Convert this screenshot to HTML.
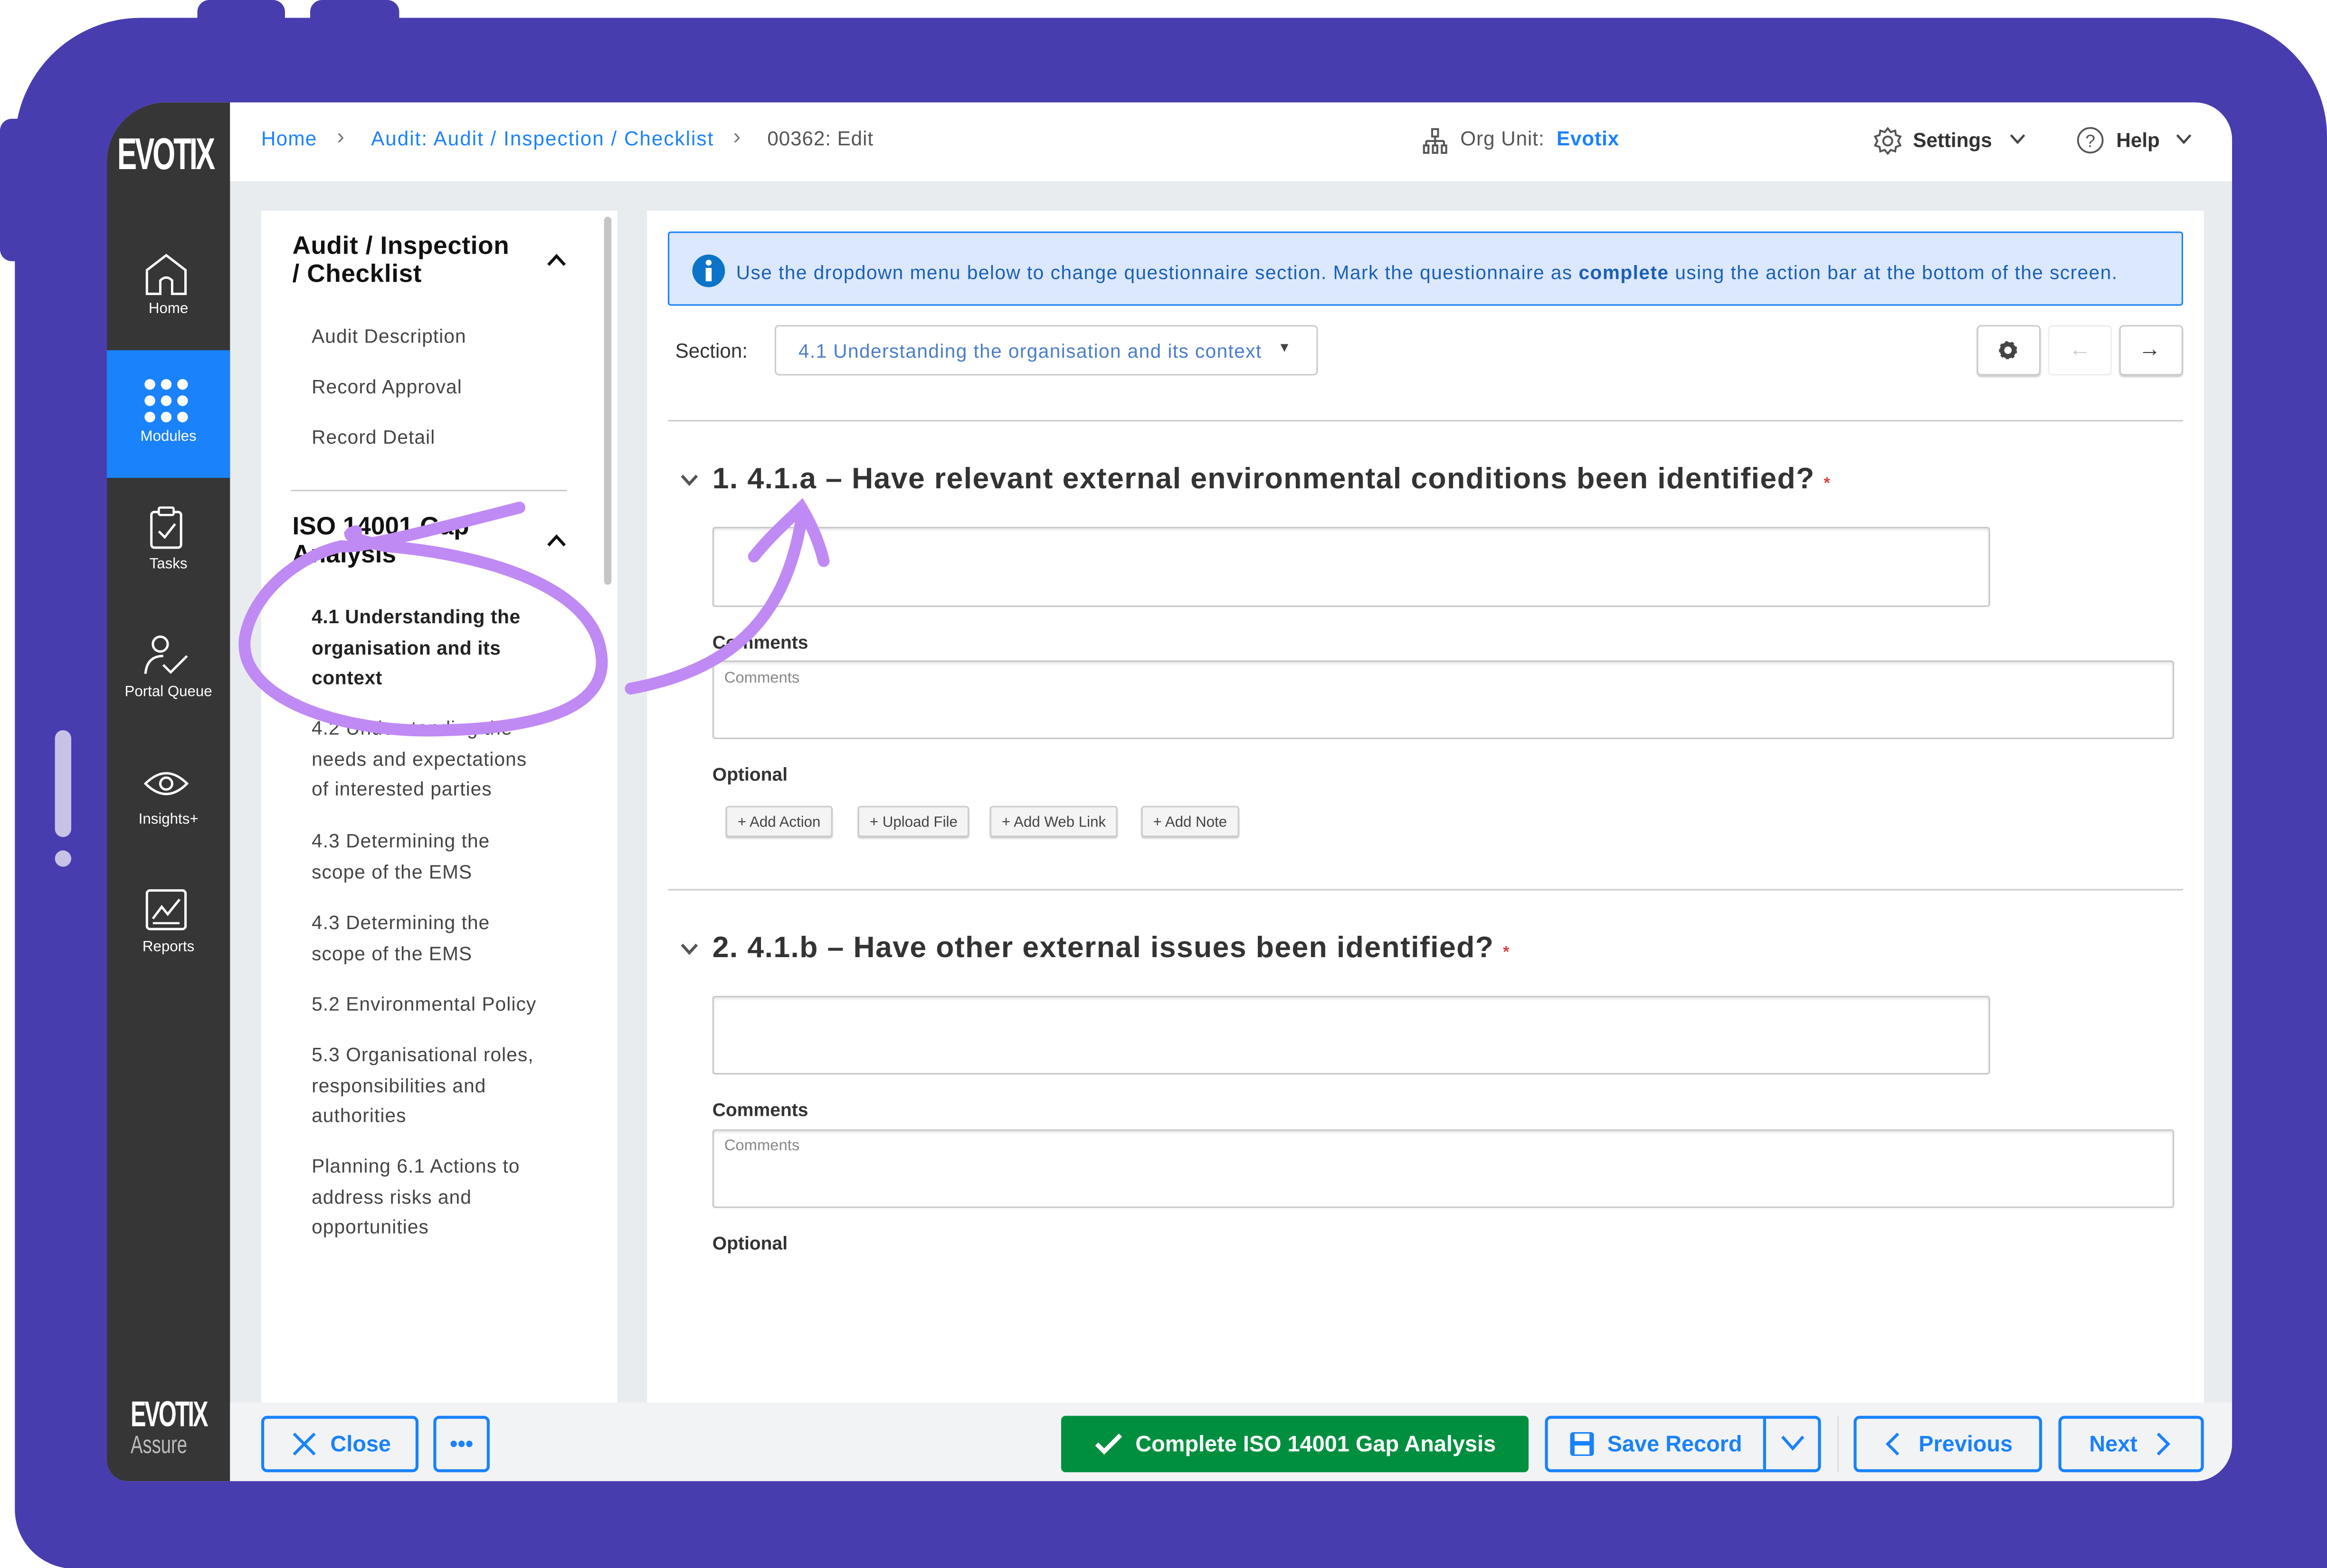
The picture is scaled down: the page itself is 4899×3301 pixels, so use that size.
<!DOCTYPE html>
<html><head><meta charset="utf-8"><style>
html,body{margin:0;padding:0;background:#fff;overflow:hidden}
body{width:4899px;height:3301px;position:relative}
#w{position:absolute;left:0;top:0;width:1568px;height:1057px;transform:scale(3.1244);transform-origin:0 0;font-family:"Liberation Sans",sans-serif}
.a{position:absolute}
.t{position:absolute;white-space:nowrap}
.side .it{position:absolute;left:0;width:83px;text-align:center;color:#fff;font-size:10px}
.nav{font-size:13px;color:#444;line-height:20.5px;position:absolute;left:210px;letter-spacing:0.35px}
.btnb{position:absolute;border:2px solid #1a82fb;border-radius:4px;color:#1a82fb;font-weight:bold;font-size:15px;box-sizing:border-box;height:38px;top:954px;display:flex;align-items:center;justify-content:center;background:#f2f3f5}
.opt{position:absolute;top:543px;height:21px;border:1px solid #ccc;border-radius:2px;background:#f4f4f4;font-size:10px;color:#444;line-height:21px;padding:0 7px;box-sizing:border-box;box-shadow:0 1px 1px #ccc}
.ta{position:absolute;border:1px solid #c8c8c8;border-radius:2px;background:#fff;box-shadow:inset 0 1px 2px #e3e3e3}
.q{font-size:20px;color:#333;font-weight:bold;letter-spacing:0.45px}
.lab{font-size:12.5px;font-weight:bold;color:#333}
</style></head><body><div id="w">
<div class="a" style="left:10px;top:12px;width:1558px;height:1045px;background:#483dae;border-radius:85px 80px 0 40px"></div>
<div class="a" style="left:133px;top:0;width:59px;height:20px;background:#483dae;border-radius:8px 8px 0 0"></div>
<div class="a" style="left:209px;top:0;width:60px;height:20px;background:#483dae;border-radius:8px 8px 0 0"></div>
<div class="a" style="left:0;top:80px;width:20px;height:96px;background:#483dae;border-radius:8px 0 0 8px"></div>
<div class="a" style="left:37px;top:492px;width:11px;height:72px;background:#c6c3e6;border-radius:6px"></div>
<div class="a" style="left:37px;top:573px;width:11px;height:11px;background:#c6c3e6;border-radius:6px"></div>
<div class="a" style="left:72px;top:69px;width:1432px;height:929px;background:#e8ecef;border-radius:40px 25px 25px 14px;overflow:hidden">
 <div class="a" style="left:0;top:0;width:83px;height:929px;background:#363636"></div>
 <div class="a" style="left:83px;top:0;width:1349px;height:53px;background:#fff"></div>
 <div class="a" style="left:83px;top:876px;width:1349px;height:53px;background:#f2f3f5"></div>
</div>
<div class="side">
 <div class="t" style="left:79px;top:88px;color:#fff;font-size:30px;font-weight:bold;letter-spacing:-2px;transform:scaleX(0.66);transform-origin:0 0">EVOTIX</div>
 <svg class="a" style="left:96px;top:170px" width="32" height="30" viewBox="0 0 32 30"><path d="M3 12 L16 2 L29 12 V28 H20 V19 Q16 15 12 19 V28 H3 Z" fill="none" stroke="#fff" stroke-width="1.6"/></svg>
 <div class="it" style="left:72px;top:203px">Home</div>
 <div class="a" style="left:72px;top:236px;width:83px;height:86px;background:#1a82fb"></div>
 <svg class="a" style="left:97px;top:255px" width="30" height="30"><g fill="#fff"><circle cx="4" cy="4" r="3.6"/><circle cx="15" cy="4" r="3.6"/><circle cx="26" cy="4" r="3.6"/><circle cx="4" cy="15" r="3.6"/><circle cx="15" cy="15" r="3.6"/><circle cx="26" cy="15" r="3.6"/><circle cx="4" cy="26" r="3.6"/><circle cx="15" cy="26" r="3.6"/><circle cx="26" cy="26" r="3.6"/></g></svg>
 <div class="it" style="left:72px;top:289px">Modules</div>
 <svg class="a" style="left:100px;top:341px" width="24" height="30"><rect x="2" y="4" width="20" height="24" rx="2" fill="none" stroke="#fff" stroke-width="1.6"/><rect x="7" y="1" width="10" height="5" rx="1" fill="#363636" stroke="#fff" stroke-width="1.5"/><path d="M7 17 L11 21 L18 12" fill="none" stroke="#fff" stroke-width="1.6"/></svg>
 <div class="it" style="left:72px;top:375px">Tasks</div>
 <svg class="a" style="left:96px;top:426px" width="32" height="32"><circle cx="12" cy="8" r="5" fill="none" stroke="#fff" stroke-width="1.6"/><path d="M2 28 Q3 16 14 16" fill="none" stroke="#fff" stroke-width="1.6"/><path d="M14 22 L19 27 L30 16" fill="none" stroke="#fff" stroke-width="1.6"/></svg>
 <div class="it" style="left:72px;top:461px">Portal Queue</div>
 <svg class="a" style="left:96px;top:518px" width="32" height="20"><path d="M2 10 Q16 -4 30 10 Q16 24 2 10Z" fill="none" stroke="#fff" stroke-width="1.6"/><circle cx="16" cy="10" r="4" fill="none" stroke="#fff" stroke-width="1.6"/></svg>
 <div class="it" style="left:72px;top:547px">Insights+</div>
 <svg class="a" style="left:98px;top:599px" width="28" height="28"><rect x="1" y="1" width="26" height="26" rx="2" fill="none" stroke="#fff" stroke-width="1.6"/><path d="M5 20 L11 12 L15 17 L23 7" fill="none" stroke="#fff" stroke-width="1.6"/><path d="M5 23 H23" stroke="#fff" stroke-width="1.4"/></svg>
 <div class="it" style="left:72px;top:633px">Reports</div>
 <div class="t" style="left:88px;top:940px;color:#fff;font-size:24px;font-weight:bold;letter-spacing:-1.5px;transform:scaleX(0.65);transform-origin:0 0">EVOTIX</div>
 <div class="t" style="left:88px;top:964px;color:#bbb;font-size:17px;transform:scaleX(0.72);transform-origin:0 0">Assure</div>
</div>
<div class="t" style="left:176px;top:86px;font-size:13.5px;color:#1a82fb;letter-spacing:0.4px">Home</div>
<div class="t" style="left:227px;top:84px;font-size:15px;color:#777">›</div>
<div class="t" style="left:250px;top:86px;font-size:13.5px;color:#1a82fb;letter-spacing:0.65px">Audit: Audit / Inspection / Checklist</div>
<div class="t" style="left:494px;top:84px;font-size:15px;color:#777">›</div>
<div class="t" style="left:517px;top:86px;font-size:13.5px;color:#555;letter-spacing:0.3px">00362: Edit</div>
<svg class="a" style="left:958px;top:86px" width="18" height="18"><g fill="none" stroke="#555" stroke-width="1.3"><rect x="7" y="1" width="4" height="5"/><path d="M9 6 V9 M3 9 H15 M3 9 V12 M9 9 V12 M15 9 V12"/><rect x="1.5" y="12" width="3" height="5"/><rect x="7.5" y="12" width="3" height="5"/><rect x="13.5" y="12" width="3" height="5"/></g></svg>
<div class="t" style="left:984px;top:86px;font-size:13.5px;color:#555;letter-spacing:0.3px">Org Unit:&nbsp; <span style="color:#1a82fb;font-weight:bold">Evotix</span></div>
<svg class="a" style="left:1262px;top:85px" width="20" height="20"><circle cx="10" cy="10" r="3" fill="none" stroke="#555" stroke-width="1.3"/><path d="M10 1.5 L12 4 L15 3 L15.5 6 L18.5 7 L17 10 L18.5 13 L15.5 14 L15 17 L12 16 L10 18.5 L8 16 L5 17 L4.5 14 L1.5 13 L3 10 L1.5 7 L4.5 6 L5 3 L8 4 Z" fill="none" stroke="#555" stroke-width="1.3"/></svg>
<div class="t" style="left:1289px;top:87px;font-size:13.5px;color:#333;font-weight:bold">Settings</div>
<svg class="a" style="left:1354px;top:90px" width="11" height="8"><path d="M1 1 L5.5 6 L10 1" fill="none" stroke="#444" stroke-width="1.5"/></svg>
<svg class="a" style="left:1399px;top:85px" width="19" height="19"><circle cx="9.5" cy="9.5" r="8.3" fill="none" stroke="#555" stroke-width="1.2"/><text x="9.5" y="14" font-size="12" text-anchor="middle" fill="#555" font-family="Liberation Sans">?</text></svg>
<div class="t" style="left:1426px;top:87px;font-size:13.5px;color:#333;font-weight:bold">Help</div>
<svg class="a" style="left:1466px;top:90px" width="11" height="8"><path d="M1 1 L5.5 6 L10 1" fill="none" stroke="#444" stroke-width="1.5"/></svg>
<div class="a" style="left:176px;top:142px;width:240px;height:803px;background:#fff"></div>
<div class="a" style="left:407px;top:146px;width:5px;height:248px;background:#c5c5c5;border-radius:3px"></div>
<div class="t" style="left:197px;top:156px;font-size:17px;font-weight:bold;color:#111;line-height:19px;letter-spacing:0.2px">Audit / Inspection<br>/ Checklist</div>
<svg class="a" style="left:368px;top:170px" width="14" height="10"><path d="M1.5 8.5 L7 2.5 L12.5 8.5" fill="none" stroke="#111" stroke-width="2"/></svg>
<div class="nav" style="top:217px">Audit Description</div>
<div class="nav" style="top:251px">Record Approval</div>
<div class="nav" style="top:285px">Record Detail</div>
<div class="a" style="left:196px;top:330px;width:186px;height:1px;background:#ccc"></div>
<div class="t" style="left:197px;top:345px;font-size:17px;font-weight:bold;color:#111;line-height:19px">ISO 14001 Gap<br>Analysis</div>
<svg class="a" style="left:368px;top:359px" width="14" height="10"><path d="M1.5 8.5 L7 2.5 L12.5 8.5" fill="none" stroke="#111" stroke-width="2"/></svg>
<div class="nav" style="top:406px;font-weight:bold;color:#222;letter-spacing:0.2px">4.1 Understanding the<br>organisation and its<br>context</div>
<div class="nav" style="top:481px">4.2 Understanding the<br>needs and expectations<br>of interested parties</div>
<div class="nav" style="top:557px">4.3 Determining the<br>scope of the EMS</div>
<div class="nav" style="top:612px">4.3 Determining the<br>scope of the EMS</div>
<div class="nav" style="top:667px">5.2 Environmental Policy</div>
<div class="nav" style="top:701px">5.3 Organisational roles,<br>responsibilities and<br>authorities</div>
<div class="nav" style="top:776px">Planning 6.1 Actions to<br>address risks and<br>opportunities</div>
<div class="a" style="left:436px;top:142px;width:1049px;height:803px;background:#fff"></div>
<div class="a" style="left:450px;top:156px;width:1021px;height:50px;background:#dce8fd;border:1px solid #1a82fb;border-radius:2px;box-sizing:border-box"></div>
<svg class="a" style="left:466px;top:171px" width="23" height="23"><circle cx="11.5" cy="11.5" r="11" fill="#0b74c8"/><circle cx="11.5" cy="6" r="2" fill="#fff"/><rect x="9.5" y="9.5" width="4" height="9" fill="#fff"/></svg>
<div class="t" style="left:496px;top:176px;font-size:13px;color:#1a60b8;letter-spacing:0.47px">Use the dropdown menu below to change questionnaire section. Mark the questionnaire as <b>complete</b> using the action bar at the bottom of the screen.</div>
<div class="t" style="left:455px;top:229px;font-size:13.5px;color:#333">Section:</div>
<div class="a" style="left:522px;top:219px;width:366px;height:34px;border:1px solid #ccc;border-radius:3px;box-sizing:border-box"></div>
<div class="t" style="left:538px;top:229px;font-size:13px;color:#4a7dc8;letter-spacing:0.45px">4.1 Understanding the organisation and its context</div>
<div class="t" style="left:861px;top:229px;font-size:9px;color:#444">▼</div>
<div class="a" style="left:1332px;top:219px;width:43px;height:34px;border:1px solid #ccc;border-radius:3px;box-sizing:border-box;box-shadow:0 1px 1px #ccc"></div>
<svg class="a" style="left:1347px;top:230px" width="12" height="12"><circle cx="6" cy="6" r="4" fill="none" stroke="#444" stroke-width="3"/><circle cx="6" cy="6" r="5.5" fill="none" stroke="#444" stroke-width="1.5" stroke-dasharray="2 2"/></svg>
<div class="a" style="left:1380px;top:219px;width:43px;height:34px;border:1px solid #eee;border-radius:3px;box-sizing:border-box"></div>
<div class="t" style="left:1394px;top:227px;font-size:15px;color:#ccc;font-weight:bold">←</div>
<div class="a" style="left:1428px;top:219px;width:43px;height:34px;border:1px solid #ccc;border-radius:3px;box-sizing:border-box;box-shadow:0 1px 1px #ccc"></div>
<div class="t" style="left:1441px;top:227px;font-size:15px;color:#333;font-weight:bold">→</div>
<div class="a" style="left:450px;top:283px;width:1021px;height:1px;background:#ccc"></div>
<svg class="a" style="left:458px;top:319px" width="13" height="9"><path d="M1.5 1.5 L6.5 7 L11.5 1.5" fill="none" stroke="#555" stroke-width="2"/></svg>
<div class="t q" style="left:480px;top:312px">1. 4.1.a – Have relevant external environmental conditions been identified? <span style="color:#e04040;font-size:11px">*</span></div>
<div class="ta" style="left:480px;top:355px;width:859px;height:52px"></div>
<div class="t lab" style="left:480px;top:426px">Comments</div>
<div class="ta" style="left:480px;top:445px;width:983px;height:51px"></div>
<div class="t" style="left:488px;top:451px;font-size:10.5px;color:#888">Comments</div>
<div class="t lab" style="left:480px;top:515px">Optional</div>
<div class="opt" style="left:489px">+ Add Action</div>
<div class="opt" style="left:578px">+ Upload File</div>
<div class="opt" style="left:667px">+ Add Web Link</div>
<div class="opt" style="left:769px">+ Add Note</div>
<div class="a" style="left:450px;top:599px;width:1021px;height:1px;background:#ccc"></div>
<svg class="a" style="left:458px;top:635px" width="13" height="9"><path d="M1.5 1.5 L6.5 7 L11.5 1.5" fill="none" stroke="#555" stroke-width="2"/></svg>
<div class="t q" style="left:480px;top:628px">2. 4.1.b – Have other external issues been identified? <span style="color:#e04040;font-size:11px">*</span></div>
<div class="ta" style="left:480px;top:671px;width:859px;height:51px"></div>
<div class="t lab" style="left:480px;top:741px">Comments</div>
<div class="ta" style="left:480px;top:761px;width:983px;height:51px"></div>
<div class="t" style="left:488px;top:766px;font-size:10.5px;color:#888">Comments</div>
<div class="t lab" style="left:480px;top:831px">Optional</div>
<div class="btnb" style="left:176px;width:106px"><svg width="20" height="20" style="margin-right:8px"><path d="M3 3 L17 17 M17 3 L3 17" stroke="#1a82fb" stroke-width="2"/></svg>Close</div>
<div class="btnb" style="left:292px;width:38px">•••</div>
<div class="a" style="left:715px;top:954px;width:315px;height:38px;background:#008f3f;border-radius:3px;color:#fff;font-weight:bold;font-size:15px;display:flex;align-items:center;justify-content:center"><svg width="20" height="16" style="margin-right:8px"><path d="M2 8 L7 13 L18 2" fill="none" stroke="#fff" stroke-width="3"/></svg>Complete ISO 14001 Gap Analysis</div>
<div class="btnb" style="left:1041px;width:186px;justify-content:flex-start;padding-left:14px"><svg width="18" height="18" style="margin-right:8px"><rect x="1" y="1" width="16" height="16" rx="2" fill="#1a82fb"/><rect x="4" y="2" width="10" height="5" fill="#fff"/><rect x="4" y="10" width="10" height="6" fill="#fff"/></svg>Save Record</div>
<div class="a" style="left:1188px;top:956px;width:2px;height:34px;background:#1a82fb"></div>
<svg class="a" style="left:1199px;top:966px" width="18" height="12"><path d="M2 2 L9 10 L16 2" fill="none" stroke="#1a82fb" stroke-width="2"/></svg>
<div class="a" style="left:1238px;top:954px;width:1px;height:38px;background:#ddd"></div>
<div class="btnb" style="left:1249px;width:127px"><svg width="12" height="18" style="margin-right:12px"><path d="M10 2 L3 9 L10 16" fill="none" stroke="#1a82fb" stroke-width="2"/></svg>Previous</div>
<div class="btnb" style="left:1387px;width:98px">Next<svg width="12" height="18" style="margin-left:12px"><path d="M2 2 L9 9 L2 16" fill="none" stroke="#1a82fb" stroke-width="2"/></svg></div>
<svg class="a" style="left:0;top:0" width="1568" height="1057">
<g fill="none" stroke="#c08af5" stroke-width="8" stroke-linecap="round">
<path d="M350 342 C280 360 240 370 230 368 C200 375 170 400 165 430 C160 470 230 495 300 492 C380 490 410 470 405 440 C400 400 340 375 260 368 C240 364 230 360 240 358"/>
<path d="M425 464 C500 450 530 410 540 350"/>
<path d="M508 375 C520 360 532 350 540 342 C546 352 552 365 555 378"/>
</g></svg>
</div></body></html>
